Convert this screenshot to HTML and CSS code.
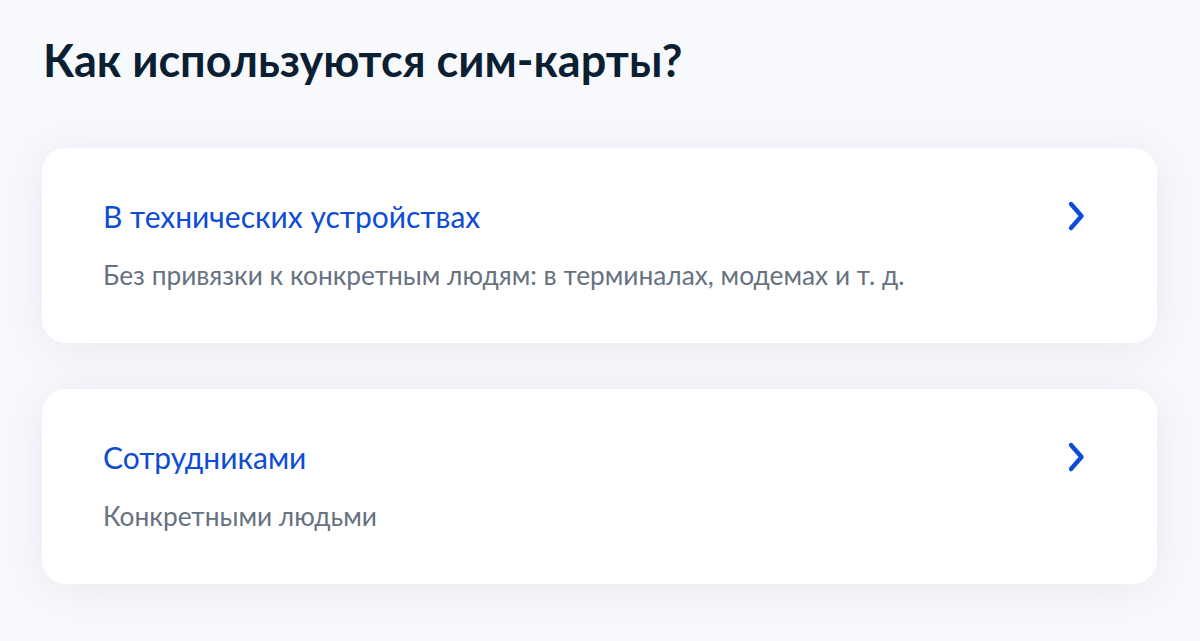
FILE: index.html
```html
<!DOCTYPE html>
<html lang="ru">
<head>
    <meta charset="UTF-8">
    <meta name="viewport" content="width=device-width, initial-scale=1.0">
    <title>Как используются сим-карты?</title>
    <link rel="stylesheet" href="styles.css">
</head>
<body>
    <main class="page">
        <h1 class="page-title">Как используются сим-карты?</h1>
        <div class="options">
            <a class="option-card" href="#">
                <div class="option-text">
                    <div class="option-title">В технических устройствах</div>
                    <div class="option-desc">Без привязки к конкретным людям: в терминалах, модемах и т. д.</div>
                </div>
                <svg class="chevron" width="20" height="32" viewBox="0 0 20 32">
                    <path d="M4 4 L14.5 16 L4 28" fill="none" stroke="#0d4cd3" stroke-width="4.4" stroke-linecap="round" stroke-linejoin="round"/>
                </svg>
            </a>
            <a class="option-card" href="#">
                <div class="option-text">
                    <div class="option-title">Сотрудниками</div>
                    <div class="option-desc">Конкретными людьми</div>
                </div>
                <svg class="chevron" width="20" height="32" viewBox="0 0 20 32">
                    <path d="M4 4 L14.5 16 L4 28" fill="none" stroke="#0d4cd3" stroke-width="4.4" stroke-linecap="round" stroke-linejoin="round"/>
                </svg>
            </a>
        </div>
    </main>
</body>
</html>
```

FILE: styles.css
```css
* {
    box-sizing: border-box;
    margin: 0;
    padding: 0;
}

body {
    font-family: Lato, "Open Sans", sans-serif;
    background-color: #f8f9fc;
    color: #0b1f33;
}

.page {
    padding: 30px 43px 40px 42px;
}

.page-title {
    font-size: 45px;
    font-weight: 700;
    line-height: 60px;
    color: #0b1f33;
    padding-left: 1px;
}

.options {
    display: flex;
    flex-direction: column;
    gap: 46px;
    margin-top: 58px;
}

.option-card {
    display: flex;
    align-items: flex-start;
    justify-content: space-between;
    background-color: #ffffff;
    border-radius: 24px;
    padding: 48px 70px 40px 61px;
    min-height: 195px;
    text-decoration: none;
    box-shadow: 0 4px 40px rgba(102, 114, 160, 0.12);
}

.option-title {
    font-size: 30px;
    line-height: 40px;
    color: #0d4cd3;
}

.option-desc {
    margin-top: 21px;
    font-size: 26.3px;
    line-height: 36px;
    color: #66727f;
}

.chevron {
    margin-top: 4px;
    flex-shrink: 0;
}
```
